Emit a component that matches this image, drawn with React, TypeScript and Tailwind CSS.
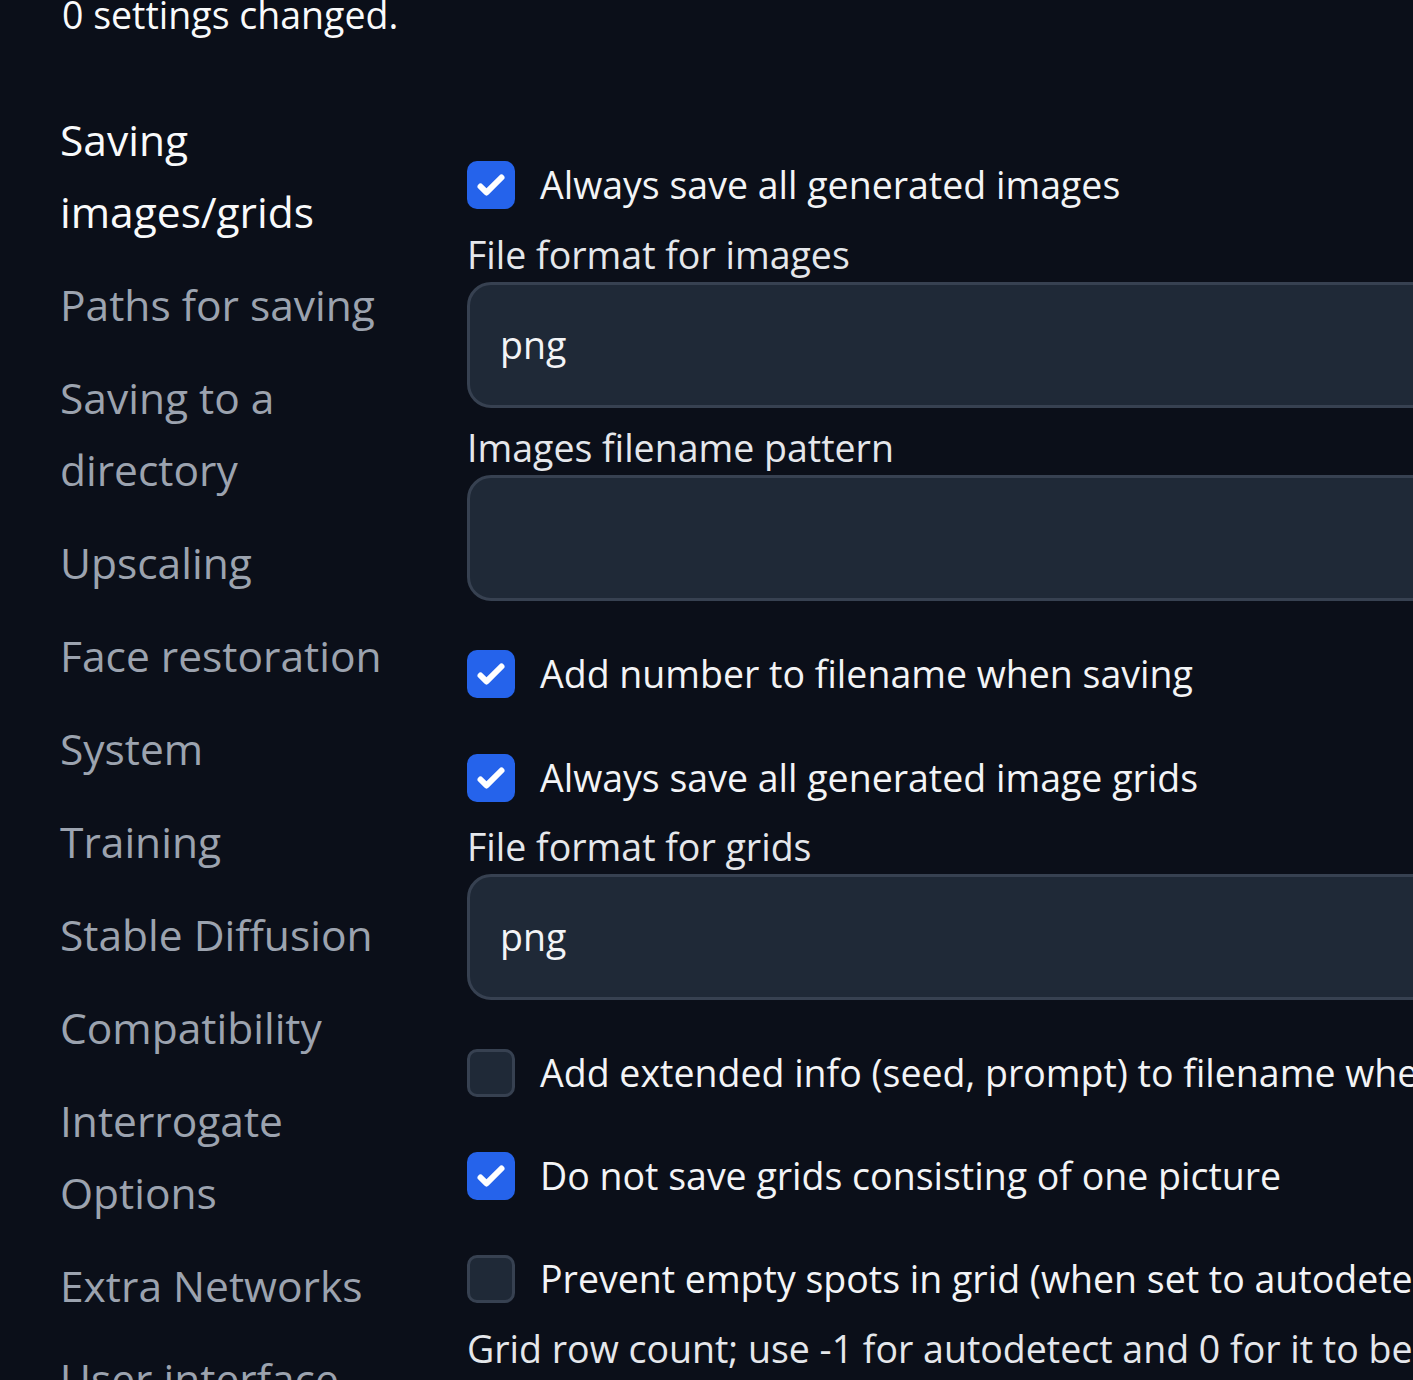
import React from "react";

const font = { fontFamily: '"Open Sans", "Noto Sans", sans-serif' };

type Item = { lines: string[]; active?: boolean };

const sections: Item[] = [
  { lines: ["Saving", "images/grids"], active: true },
  { lines: ["Paths for saving"] },
  { lines: ["Saving to a", "directory"] },
  { lines: ["Upscaling"] },
  { lines: ["Face restoration"] },
  { lines: ["System"] },
  { lines: ["Training"] },
  { lines: ["Stable Diffusion"] },
  { lines: ["Compatibility"] },
  { lines: ["Interrogate", "Options"] },
  { lines: ["Extra Networks"] },
  { lines: ["User interface"] },
];

function Checkbox({ checked, label, className = "" }: { checked: boolean; label: string; className?: string }) {
  return (
    <label className={`flex items-center gap-[25px] whitespace-nowrap ${className}`}>
      {checked ? (
        <span className="flex h-[48px] w-[48px] shrink-0 items-center justify-center rounded-[10px] bg-[#2563eb]">
          <svg viewBox="0 0 16 16" className="h-[48px] w-[48px]" fill="white">
            <path d="M12.207 4.793a1 1 0 010 1.414l-5 5a1 1 0 01-1.414 0l-2-2a1 1 0 011.414-1.414L6.5 9.086l4.293-4.293a1 1 0 011.414 0z" />
          </svg>
        </span>
      ) : (
        <span className="h-[48px] w-[48px] shrink-0 rounded-[10px] border-[3px] border-[#374151] bg-[#1f2937]" />
      )}
      <span className="text-[37.5px] leading-[48px] text-[#f3f4f6]">{label}</span>
    </label>
  );
}

function Field({ label, value, className = "" }: { label: string; value: string; className?: string }) {
  return (
    <div className={className}>
      <div className="whitespace-nowrap text-[37.5px] leading-[54px] text-[#e5e7eb]">{label}</div>
      <div className="flex h-[126px] items-center rounded-[24px] border-[3px] border-[#374151] bg-[#1f2937] pl-[30px]">
        <span className="text-[37.5px] text-[#f3f4f6]">{value}</span>
      </div>
    </div>
  );
}

export default function App() {
  return (
    <div className="h-[1380px] overflow-hidden bg-[#0b0f19] px-[60px]" style={font}>
      <div className="mt-[-12px] whitespace-nowrap pl-[2px] text-[37.5px] leading-[54px] text-[#f9fafb]">
        0 settings changed.
      </div>

      <div className="mt-[62px] flex">
        <nav className="flex w-[407px] shrink-0 flex-col gap-[21px]">
          {sections.map((s) => (
            <div
              key={s.lines.join(" ")}
              className={`text-[42.5px] leading-[72px] whitespace-nowrap ${s.active ? "text-[#f9fafb]" : "text-[#9ca3af]"}`}
            >
              {s.lines.map((l) => (
                <div key={l}>{l}</div>
              ))}
            </div>
          ))}
        </nav>

        <div className="w-[1200px] shrink-0">
          <Checkbox checked label="Always save all generated images" className="mt-[57px]" />
          <Field label="File format for images" value="png" className="mt-[19px]" />
          <Field label="Images filename pattern" value="" className="mt-[13px]" />
          <Checkbox checked label="Add number to filename when saving" className="mt-[49px]" />
          <Checkbox checked label="Always save all generated image grids" className="mt-[56px]" />
          <Field label="File format for grids" value="png" className="mt-[18px]" />
          <Checkbox checked={false} label="Add extended info (seed, prompt) to filename when saving grid" className="mt-[49px]" />
          <Checkbox checked label="Do not save grids consisting of one picture" className="mt-[55px]" />
          <Checkbox checked={false} label="Prevent empty spots in grid (when set to autodetect)" className="mt-[55px]" />
          <div className="mt-[19px] whitespace-nowrap text-[37.5px] leading-[54px] text-[#e5e7eb]">
            Grid row count; use -1 for autodetect and 0 for it to be same as batch size
          </div>
        </div>
      </div>
    </div>
  );
}
